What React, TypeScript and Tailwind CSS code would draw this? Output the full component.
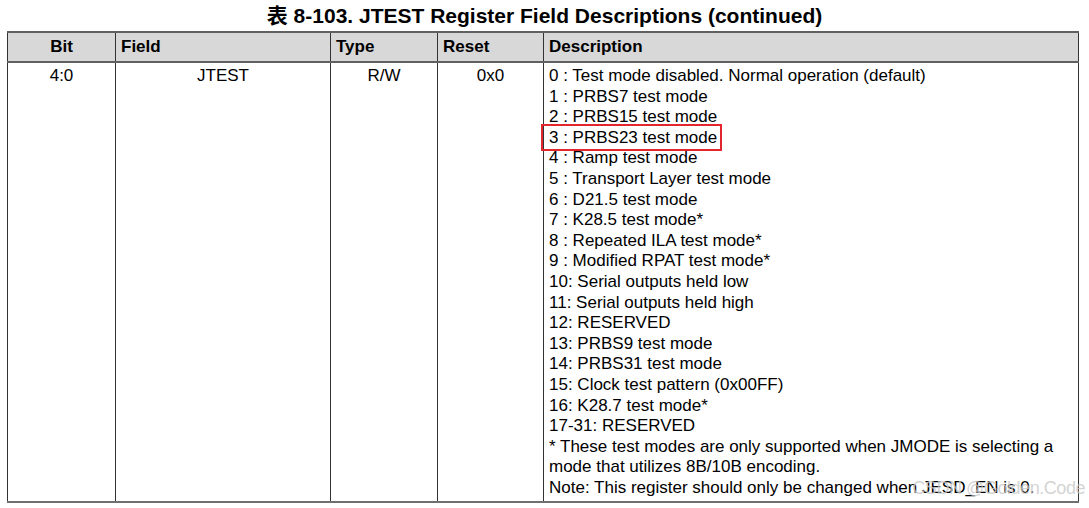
import React from "react";

const lines = [
  "0 : Test mode disabled. Normal operation (default)",
  "1 : PRBS7 test mode",
  "2 : PRBS15 test mode",
  "3 : PRBS23 test mode",
  "4 : Ramp test mode",
  "5 : Transport Layer test mode",
  "6 : D21.5 test mode",
  "7 : K28.5 test mode*",
  "8 : Repeated ILA test mode*",
  "9 : Modified RPAT test mode*",
  "10: Serial outputs held low",
  "11: Serial outputs held high",
  "12: RESERVED",
  "13: PRBS9 test mode",
  "14: PRBS31 test mode",
  "15: Clock test pattern (0x00FF)",
  "16: K28.7 test mode*",
  "17-31: RESERVED",
  "* These test modes are only supported when JMODE is selecting a",
  "mode that utilizes 8B/10B encoding.",
  "Note: This register should only be changed when JESD_EN is 0.",
];

export default function App() {
  return (
    <div
      className="relative w-[1089px] h-[508px] bg-white text-black overflow-hidden"
      style={{ fontFamily: '"Liberation Sans", Arial, "Noto Sans CJK SC", sans-serif' }}
    >
      <h2 className="text-center font-bold text-[21px] leading-[24px] pt-[4px] h-[31px]">
        表 8-103. JTEST Register Field Descriptions (continued)
      </h2>
      <table className="ml-[7px] border-collapse text-[17px] leading-[20.6px] table-fixed w-[1071px]">
        <colgroup>
          <col className="w-[108px]" />
          <col className="w-[215px]" />
          <col className="w-[107px]" />
          <col className="w-[106px]" />
          <col className="w-[535px]" />
        </colgroup>
        <thead>
          <tr className="bg-[#d8d8d8] h-[30px] border-t-2 border-b-2 border-t-[#606060] border-b-[#606060]">
            <th className="border-x border-[#333] font-bold text-center px-[5px]">Bit</th>
            <th className="border-x border-[#333] font-bold text-left px-[5px]">Field</th>
            <th className="border-x border-[#333] font-bold text-left px-[5px]">Type</th>
            <th className="border-x border-[#333] font-bold text-left px-[5px]">Reset</th>
            <th className="border-x border-[#333] font-bold text-left px-[5px]">Description</th>
          </tr>
        </thead>
        <tbody>
          <tr className="border-b-2 border-b-[#707070] align-top">
            <td className="border-x border-[#333] text-center pt-[3px]">4:0</td>
            <td className="border-x border-[#333] text-center pt-[3px]">JTEST</td>
            <td className="border-x border-[#333] text-center pt-[3px]">R/W</td>
            <td className="border-x border-[#333] text-center pt-[3px]">0x0</td>
            <td className="border-x border-[#333] px-[5px] pt-[3px] pb-[3px]">
              {lines.map((l, i) => (
                <div key={i} className="whitespace-nowrap">
                  {i === 3 ? (
                    <span className="relative inline-block">
                      {l}
                      <span className="absolute -left-[8px] -right-[5px] -top-[4px] -bottom-[3px] border-2 border-[#e3262e]" />
                    </span>
                  ) : (
                    l
                  )}
                </div>
              ))}
            </td>
          </tr>
        </tbody>
      </table>
      <div className="absolute right-[4px] bottom-[6px] text-[18px] text-[#c8c8c8]/80 tracking-tight">
        CSDN @Golden.Code
      </div>
    </div>
  );
}
